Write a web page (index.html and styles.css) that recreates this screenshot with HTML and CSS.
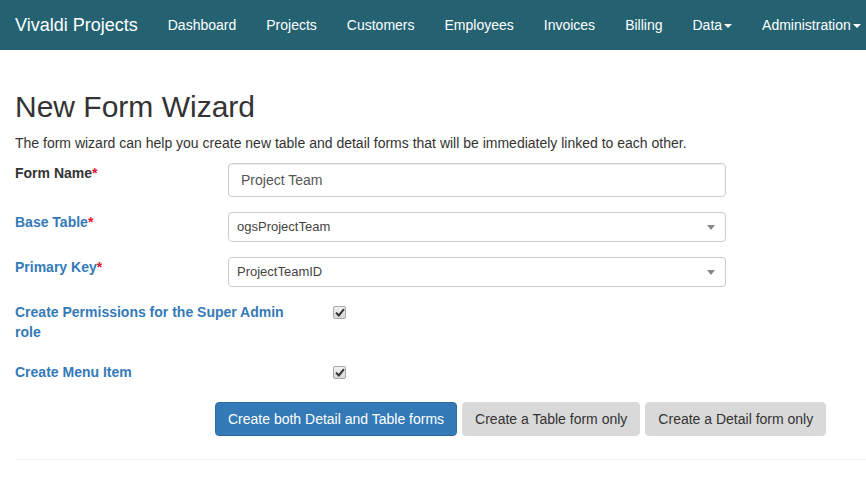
FILE: index.html
```
<!doctype html>
<html lang="en">
<head>
  <meta charset="utf-8" />
  <title>New Form Wizard - Vivaldi Projects</title>
  <link rel="stylesheet" href="styles.css">
</head>
<body>
  <nav class="navbar">
    <a class="brand" href="#">Vivaldi Projects</a>
    <ul class="navLinks">
      <li><a href="#">Dashboard</a></li>
      <li><a href="#">Projects</a></li>
      <li><a href="#">Customers</a></li>
      <li><a href="#">Employees</a></li>
      <li><a href="#">Invoices</a></li>
      <li><a href="#">Billing</a></li>
      <li><a href="#">Data<span class="caret"></span></a></li>
      <li><a href="#">Administration<span class="caret"></span></a></li>
    </ul>
  </nav>

  <main class="container">
    <h1>New Form Wizard</h1>
    <p class="intro">The form wizard can help you create new table and detail forms that will be immediately linked to each other.</p>

    <form class="wizard">
      <div class="formRow">
        <label class="lbl lblDark" for="formName">Form Name<span class="req">*</span></label>
        <div class="field">
          <input class="textInput" id="formName" type="text" value="Project Team">
        </div>
      </div>

      <div class="formRow">
        <label class="lbl">Base Table<span class="req">*</span></label>
        <div class="field">
          <div class="selectBox">
            <span>ogsProjectTeam</span>
            <b class="arrow"></b>
          </div>
        </div>
      </div>

      <div class="formRow">
        <label class="lbl">Primary Key<span class="req">*</span></label>
        <div class="field">
          <div class="selectBox">
            <span>ProjectTeamID</span>
            <b class="arrow"></b>
          </div>
        </div>
      </div>

      <div class="formRow checkRow">
        <label class="lbl lblWide">Create Permissions for the Super Admin role</label>
        <div class="checkCol">
          <span class="check" role="checkbox" aria-checked="true">
            <svg width="10" height="9" viewBox="0 0 10 9"><path d="M1 4.6 L3.8 7.4 L9 1.2" fill="none" stroke="#333" stroke-width="2"/></svg>
          </span>
        </div>
      </div>

      <div class="formRow checkRow">
        <label class="lbl lblWide">Create Menu Item</label>
        <div class="checkCol">
          <span class="check" role="checkbox" aria-checked="true">
            <svg width="10" height="9" viewBox="0 0 10 9"><path d="M1 4.6 L3.8 7.4 L9 1.2" fill="none" stroke="#333" stroke-width="2"/></svg>
          </span>
        </div>
      </div>

      <div class="actions">
        <button class="btn btnPrimary" type="button">Create both Detail and Table forms</button>
        <button class="btn btnGray" type="button">Create a Table form only</button>
        <button class="btn btnGray" type="button">Create a Detail form only</button>
      </div>
    </form>

    <hr class="rule">
  </main>
</body>
</html>
```

FILE: styles.css
```
*{ box-sizing:border-box; }

body{
  margin:0;
  font-family: "Liberation Sans", Arial, sans-serif;
  font-size:14px;
  line-height:20px;
  color:#333;
  background:#fff;
  overflow:hidden;
}

/* top bar */
.navbar{
  display:flex;
  align-items:center;
  height:50px;
  background:#246272;
  white-space:nowrap;
}
.brand{
  padding:15px;
  font-size:18px;
  line-height:20px;
  color:#fff;
  text-decoration:none;
}
.navLinks{
  display:flex;
  margin:0;
  padding:0;
  list-style:none;
}
.navLinks a{
  display:block;
  padding:15px;
  color:#fff;
  text-decoration:none;
}
.caret{
  display:inline-block;
  width:0;
  height:0;
  margin-left:2px;
  vertical-align:middle;
  border-top:4px solid #fff;
  border-left:4px solid transparent;
  border-right:4px solid transparent;
}

/* page */
.container{
  padding:20px 0 0 15px;
}
h1{
  margin:20px 0 10px 0;
  font-size:30px;
  font-weight:400;
  line-height:33px;
  color:#333;
}
.intro{
  margin:0 0 10px 0;
}

.formRow{
  display:flex;
  align-items:flex-start;
  margin-bottom:15px;
}
.lbl{
  width:213px;
  flex-shrink:0;
  margin-bottom:5px;
  padding-right:15px;
  font-weight:700;
  color:#337ab7;
}
.lblDark{ color:#333; }
.lblWide{ width:318px; padding-right:33px; }
.req{ color:#e8112d; }

.field{ width:498px; }

.textInput{
  display:block;
  width:100%;
  height:34px;
  padding:6px 12px;
  border:1px solid #ccc;
  border-radius:4px;
  font:14px/20px "Liberation Sans", Arial, sans-serif;
  color:#555;
  box-shadow: inset 0 1px 1px rgba(0,0,0,.075);
}

.selectBox{
  position:relative;
  height:30px;
  padding:0 20px 0 8px;
  border:1px solid #ccc;
  border-radius:4px;
  font-size:13px;
  line-height:28px;
  color:#444;
}
.selectBox .arrow{
  position:absolute;
  top:12px;
  right:10px;
  width:0;
  height:0;
  border-top:5px solid #888;
  border-left:4px solid transparent;
  border-right:4px solid transparent;
}

.checkCol{ padding-top:4px; }
.check{
  display:grid;
  place-items:center;
  width:13px;
  height:13px;
  border:1px solid #a8a8a8;
  border-radius:2px;
  background: linear-gradient(180deg, #f2f2f2, #d8d8d8);
}

.actions{
  display:flex;
  gap:5px;
  padding-left:200px;
}
.btn{
  height:34px;
  padding:6px 12px;
  border:1px solid transparent;
  border-radius:4px;
  font:14px/20px "Liberation Sans", Arial, sans-serif;
  cursor:pointer;
  white-space:nowrap;
}
.btnPrimary{
  background:#337ab7;
  border-color:#2e6da4;
  color:#fff;
}
.btnGray{
  background:#d9d9d9;
  border-color:#d9d9d9;
  color:#333;
}

.rule{
  margin:23px 0 0 0;
  border:0;
  border-top:1px solid #eee;
}
```
